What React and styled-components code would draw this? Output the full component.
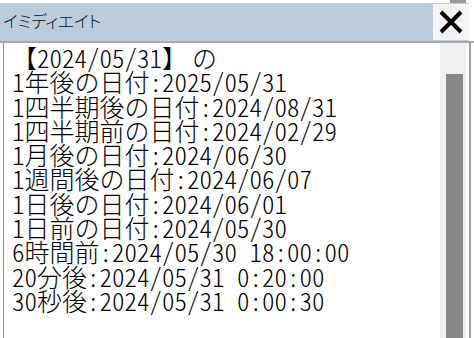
import React from 'react';
import styled, { createGlobalStyle } from 'styled-components';

const GlobalStyle = createGlobalStyle`
  html, body {
    margin: 0;
    padding: 0;
    background: #ffffff;
    overflow: hidden;
  }
`;

const Window = styled.div`
  width: 474px;
  height: 338px;
  display: flex;
  flex-direction: column;
  background: #ffffff;
  overflow: hidden;
`;

const TopStrip = styled.div`
  height: 3px;
  display: flex;
  justify-content: flex-end;
  padding-right: 8px;
`;

const Chip = styled.div`
  width: 16px;
  height: 3px;
  background: #9a9a9a;
`;

const TitleBar = styled.div`
  height: 38px;
  display: flex;
  align-items: center;
  justify-content: space-between;
  background: #bdccda;
  margin-right: 5px;
`;

const Title = styled.span`
  padding-left: 3px;
  padding-bottom: 2px;
  font-family: "Noto Sans CJK JP", sans-serif;
  font-feature-settings: "palt" 1;
  font-weight: 300;
  font-size: 16.5px;
  color: #111111;
`;

const CloseButton = styled.button`
  width: 36px;
  height: 36px;
  margin: 0;
  padding: 0;
  border: none;
  background: #f3f3f3;
  display: flex;
  align-items: center;
  justify-content: center;
`;

const Separator = styled.div`
  height: 2px;
  background: #a8a8a8;
`;

const Body = styled.div`
  flex: 1;
  display: flex;
  padding-left: 3px;
  min-height: 0;
`;

const Pane = styled.div`
  flex: 1;
  border-left: 1px solid #8c8c8c;
  padding: 2px 0 0 8px;
  background: #ffffff;
  font-family: "Noto Sans CJK JP", sans-serif;
  font-feature-settings: "hwid" 1;
  font-weight: 300;
  font-size: 25px;
  line-height: 24.3px;
  color: #000000;
  white-space: pre;
`;

const Line = styled.div`
  height: 24.3px;
`;

const ScrollTrack = styled.div`
  width: 26px;
  background: #f0f0f0;
  padding: 31px 3px 0 6px;
  box-sizing: border-box;
  display: flex;
`;

const Thumb = styled.div`
  flex: 1;
  background: #878787;
`;

const EdgeLine = styled.div`
  width: 2px;
  margin-left: 3px;
  margin-right: 3px;
  background: #9c9c9c;
`;

const lines = [
  '【2024/05/31】\u2009の',
  '1年後の日付:2025/05/31',
  '1四半期後の日付:2024/08/31',
  '1四半期前の日付:2024/02/29',
  '1月後の日付:2024/06/30',
  '1週間後の日付:2024/06/07',
  '1日後の日付:2024/06/01',
  '1日前の日付:2024/05/30',
  '6時間前:2024/05/30 18:00:00',
  '20分後:2024/05/31 0:20:00',
  '30秒後:2024/05/31 0:00:30',
];

const App = () => {
  return (
    <Window>
      <GlobalStyle />
      <TopStrip>
        <Chip />
      </TopStrip>
      <TitleBar>
        <Title>イミディエイト</Title>
        <CloseButton aria-label="close">
          <svg width="24" height="24" viewBox="0 0 24 24">
            <path d="M2 2 L22 22 M22 2 L2 22" stroke="#000" strokeWidth="4" fill="none" />
          </svg>
        </CloseButton>
      </TitleBar>
      <Separator />
      <Body>
        <Pane>
          {lines.map((l) => (
            <Line key={l}>{l}</Line>
          ))}
        </Pane>
        <ScrollTrack>
          <Thumb />
        </ScrollTrack>
        <EdgeLine />
      </Body>
    </Window>
  );
};

export default App;
